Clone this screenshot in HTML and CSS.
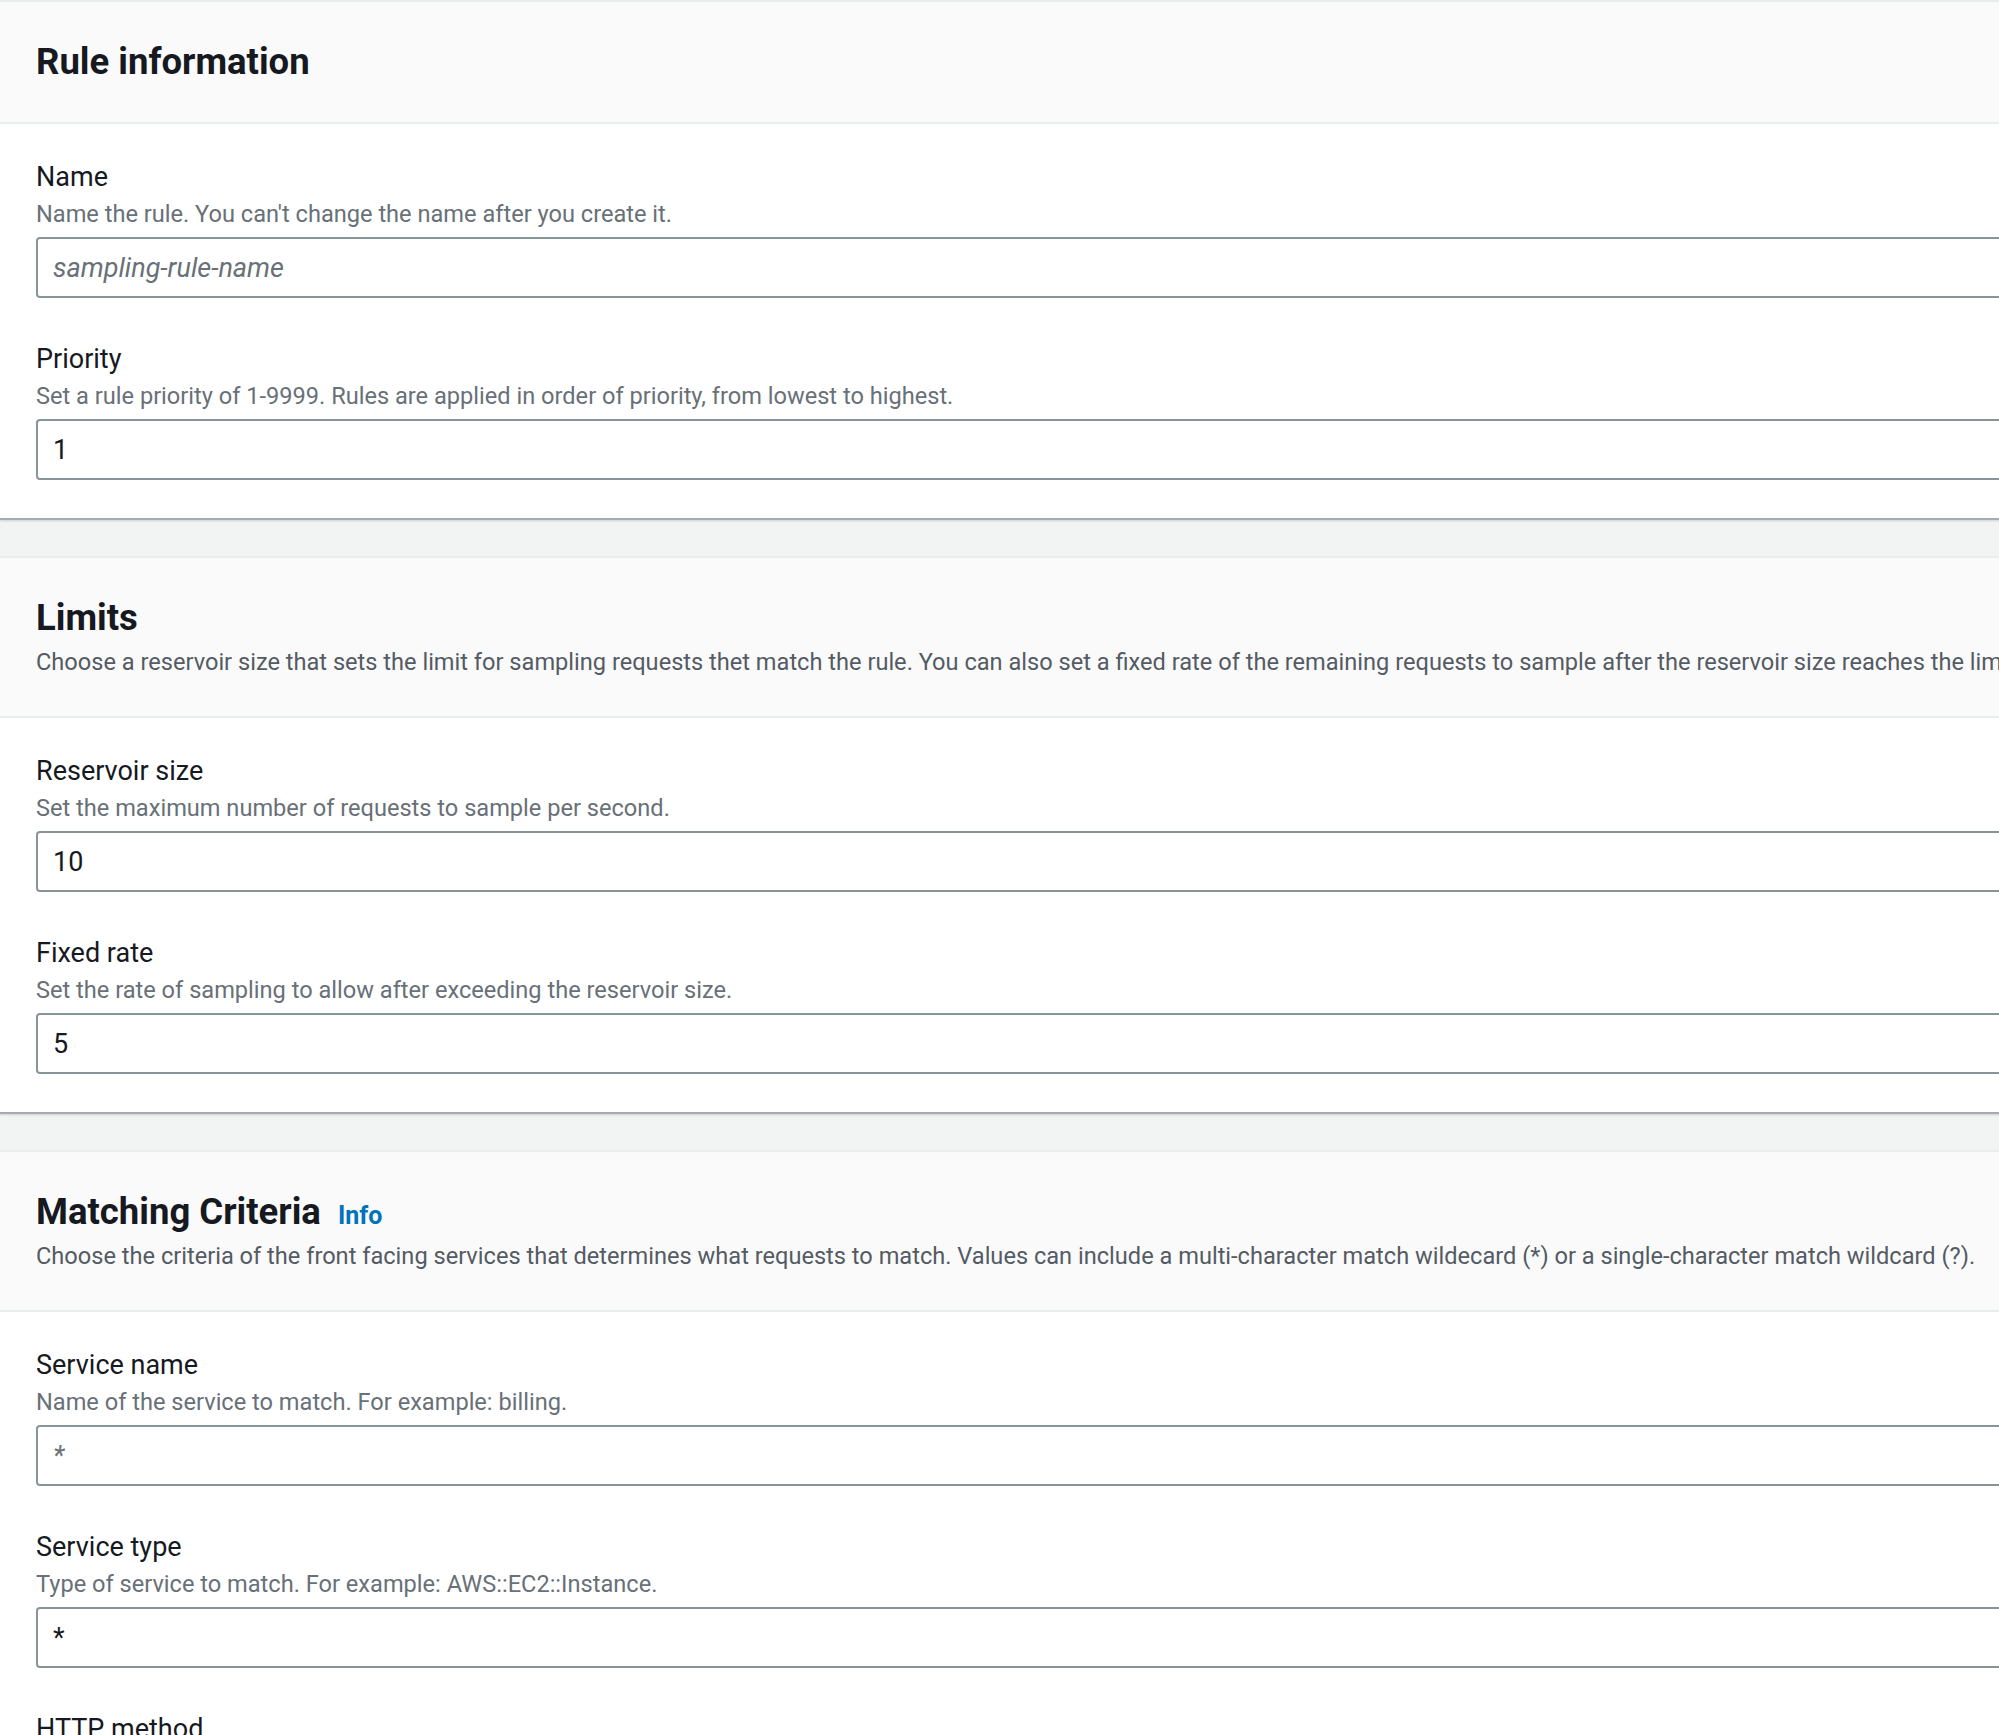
FILE: index.html
```html
<!DOCTYPE html>
<html lang="en">
<head>
  <meta charset="UTF-8">
  <meta name="viewport" content="width=device-width, initial-scale=1.0">
  <title>Create sampling rule</title>
  <link rel="stylesheet" href="styles.css">
</head>
<body>
  <div class="page">
    <div class="container">
      <div class="container-header">
        <h2>Rule information</h2>
      </div>
      <div class="container-body">
        <div class="field">
          <label for="ruleName">Name</label>
          <div class="description">Name the rule. You can't change the name after you create it.</div>
          <input type="text" id="ruleName" placeholder="sampling-rule-name">
        </div>
        <div class="field">
          <label for="priority">Priority</label>
          <div class="description">Set a rule priority of 1-9999. Rules are applied in order of priority, from lowest to highest.</div>
          <input type="text" id="priority" value="1">
        </div>
      </div>
    </div>

    <div class="container">
      <div class="container-header">
        <h2>Limits</h2>
        <div class="header-description">Choose a reservoir size that sets the limit for sampling requests thet match the rule. You can also set a fixed rate of the remaining requests to sample after the reservoir size reaches the limit.</div>
      </div>
      <div class="container-body">
        <div class="field">
          <label for="reservoir">Reservoir size</label>
          <div class="description">Set the maximum number of requests to sample per second.</div>
          <input type="text" id="reservoir" value="10">
        </div>
        <div class="field">
          <label for="fixedRate">Fixed rate</label>
          <div class="description">Set the rate of sampling to allow after exceeding the reservoir size.</div>
          <input type="text" id="fixedRate" value="5">
        </div>
      </div>
    </div>

    <div class="container">
      <div class="container-header">
        <h2>Matching Criteria <a href="#" class="info-link">Info</a></h2>
        <div class="header-description">Choose the criteria of the front facing services that determines what requests to match. Values can include a multi-character match wildecard (*) or a single-character match wildcard (?).</div>
      </div>
      <div class="container-body">
        <div class="field">
          <label for="serviceName">Service name</label>
          <div class="description">Name of the service to match. For example: billing.</div>
          <input type="text" id="serviceName" placeholder="*">
        </div>
        <div class="field">
          <label for="serviceType">Service type</label>
          <div class="description">Type of service to match. For example: AWS::EC2::Instance.</div>
          <input type="text" id="serviceType" value="*">
        </div>
        <div class="field">
          <label for="httpMethod">HTTP method</label>
          <div class="description">HTTP method of the request to match. For example: GET.</div>
          <input type="text" id="httpMethod" value="*">
        </div>
      </div>
    </div>
  </div>
</body>
</html>
```

FILE: styles.css
```css
html, body {
  margin: 0;
  overflow: hidden;
}
body {
  background: #f2f3f3;
  color: #16191f;
  font-family: Roboto, 'Noto Sans', sans-serif;
}
.page {
  width: 2300px;
  display: flex;
  flex-direction: column;
  gap: 38px;
}
.container {
  background: #fff;
  border-top: 2px solid #eaeded;
  box-shadow: 0 2px 0 0 #a3acb2, 0 3px 2px rgba(0, 28, 36, 0.15);
}
.container-header {
  background: #fafafa;
  padding: 38px 36px 38px;
  border-bottom: 2px solid #eaeded;
}
h2 {
  margin: 0;
  height: 44px;
  font-size: 36.5px;
  line-height: 44px;
  font-weight: 700;
  display: flex;
  align-items: baseline;
  gap: 17px;
}
.info-link {
  color: #0073bb;
  font-size: 25px;
  line-height: 1;
  font-weight: 700;
  text-decoration: none;
}
.header-description {
  margin-top: 6px;
  font-size: 23.6px;
  line-height: 32px;
  color: #545b64;
  white-space: nowrap;
}
.container-body {
  padding: 33px 36px 38px;
  display: flex;
  flex-direction: column;
  gap: 41px;
}
.field label {
  display: block;
  font-size: 27px;
  line-height: 41px;
}
.description {
  font-size: 23.6px;
  line-height: 32px;
  color: #687078;
  margin-bottom: 7px;
  white-space: nowrap;
}
input {
  box-sizing: border-box;
  display: block;
  width: 100%;
  height: 61px;
  padding: 0 15px;
  border: 2px solid #879596;
  border-radius: 4px;
  font-family: Roboto, 'Noto Sans', sans-serif;
  font-size: 27px;
  color: #16191f;
  background: #fff;
}
input::placeholder {
  color: #687078;
  font-style: italic;
}
```
